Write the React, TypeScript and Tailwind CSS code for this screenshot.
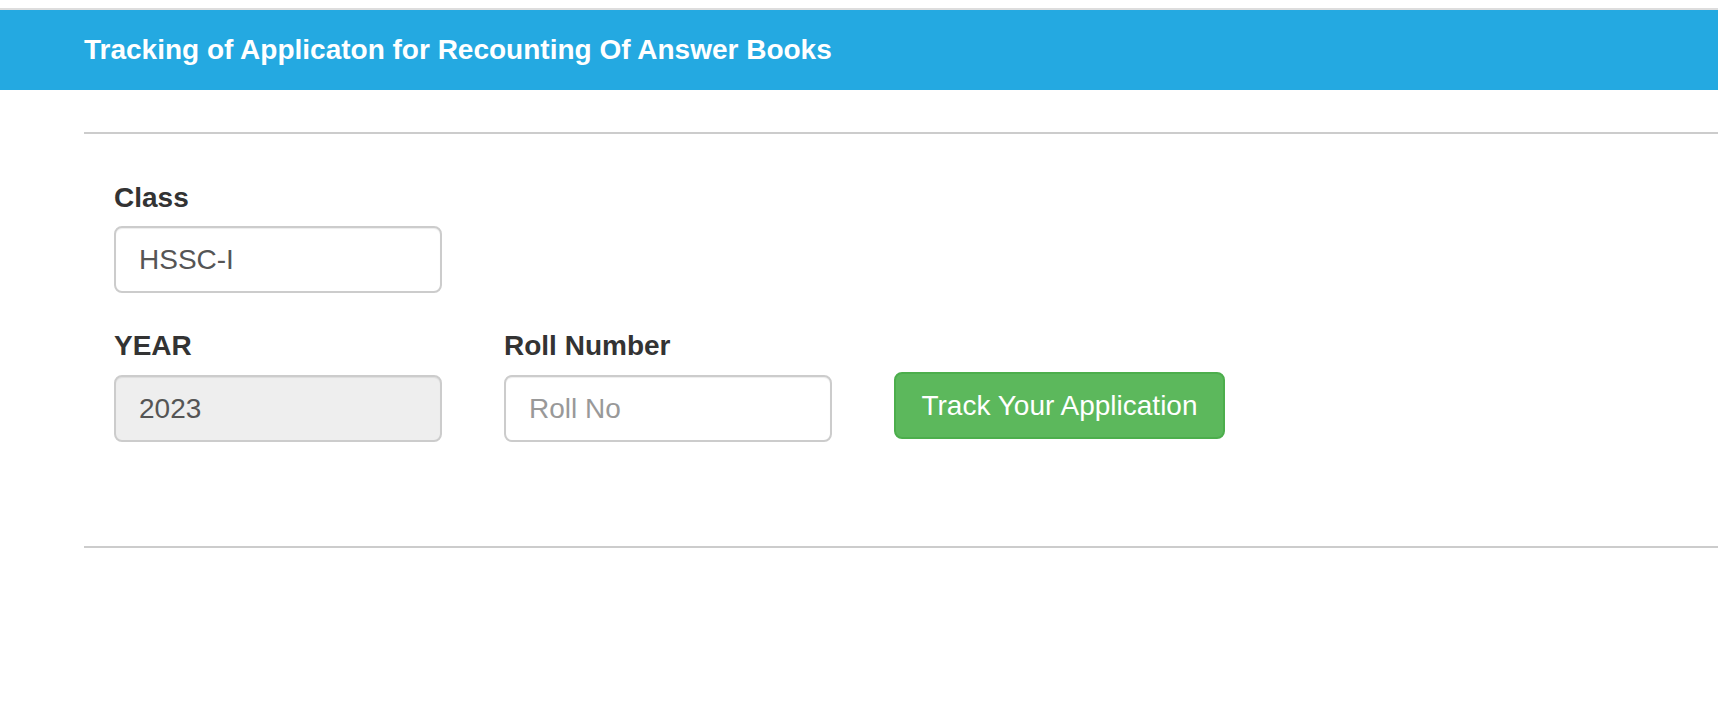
import React from "react";

export default function App() {
  return (
    <div className="min-h-[702px] w-full bg-white font-['Liberation_Sans',Arial,sans-serif] text-[#333]">
      <div className="h-[8px] bg-white" />
      <div className="border-t-2 border-[#dddddd] bg-[#24a9e1] h-[82px] flex items-center pl-[84px]">
        <h1 className="text-white font-bold text-[28px] leading-none">
          Tracking of Applicaton for Recounting Of Answer Books
        </h1>
      </div>
      <div className="pl-[84px]">
        <div className="mt-[42px] border-t-2 border-[#cccccc]" />
        <div className="pl-[30px] pt-[46px] pb-[104px]">
          <div className="flex flex-col">
            <label className="font-bold text-[28px] leading-[36px]">Class</label>
            <div className="mt-[10px] w-[328px] h-[67px] rounded-[8px] border-2 border-[#cccccc] flex items-center px-[23px] text-[28px] text-[#555] shadow-[inset_0_1px_1px_rgba(0,0,0,0.075)]">
              HSSC-I
            </div>
          </div>
          <div className="mt-[35px] grid grid-cols-[390px_390px_390px] items-start">
            <div className="flex flex-col">
              <label className="font-bold text-[28px] leading-[36px]">YEAR</label>
              <div className="mt-[11px] w-[328px] h-[67px] rounded-[8px] border-2 border-[#cccccc] bg-[#eeeeee] flex items-center px-[23px] text-[28px] text-[#555] shadow-[inset_0_1px_1px_rgba(0,0,0,0.075)]">
                2023
              </div>
            </div>
            <div className="flex flex-col">
              <label className="font-bold text-[28px] leading-[36px]">Roll Number</label>
              <input
                placeholder="Roll No"
                className="mt-[11px] w-[328px] h-[67px] rounded-[8px] border-2 border-[#cccccc] bg-white px-[23px] text-[28px] text-[#555] placeholder:text-[#999] outline-none shadow-[inset_0_1px_1px_rgba(0,0,0,0.075)]"
              />
            </div>
            <div className="pt-[44px]">
              <button className="w-[331px] h-[67px] rounded-[8px] border-2 border-[#4cae4c] bg-[#5cb85c] text-white text-[28px] flex items-center justify-center">
                Track Your Application
              </button>
            </div>
          </div>
        </div>
        <div className="border-t-2 border-[#cccccc]" />
      </div>
    </div>
  );
}
